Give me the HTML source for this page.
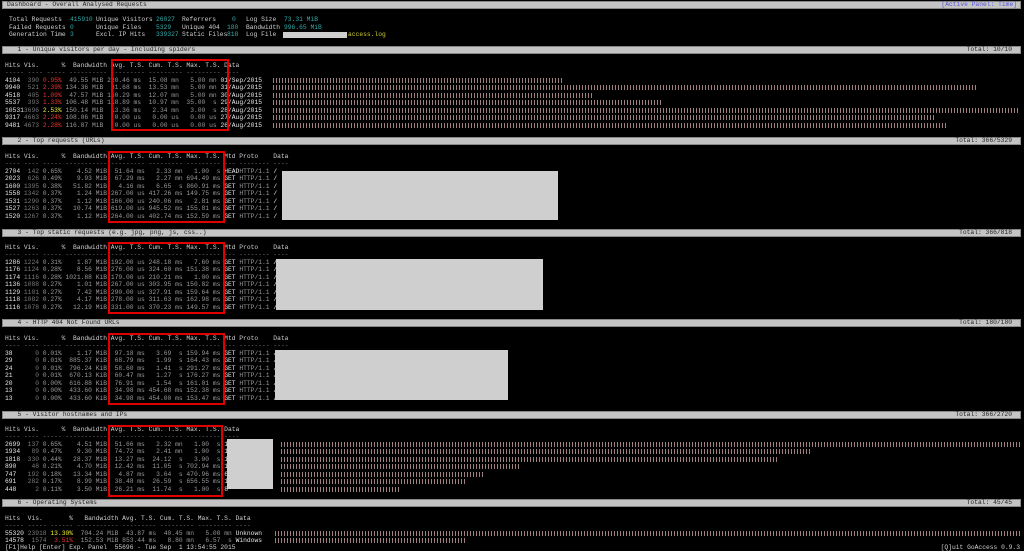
<!DOCTYPE html>
<html><head><meta charset="utf-8"><style>
html,body{margin:0;padding:0;background:#000;width:1024px;height:551px;overflow:hidden}
body{position:relative;font-family:"Liberation Mono",monospace;font-size:6.3px;color:#aaa}
.r{position:absolute;left:5px;white-space:pre;line-height:7.55px;height:7.55px}
.a{position:absolute;white-space:pre;line-height:7.55px}
.bar{position:absolute;left:2px;width:1019px;height:8px;background:#c4c4c4;border:1px solid #888;box-sizing:border-box;color:#222}
.bar span{position:absolute;line-height:6px;top:0;white-space:pre}
.w{color:#e6e6e6}
.g{color:#7a7a7a}
.d{color:#9a9a9a}
.r2{color:#ee3333}
.y{color:#eeee33}
.t{color:#33aaaa}
.l{color:#d0d0d0}
.box{position:absolute;border:2px solid #e00000;box-sizing:border-box}
.gray{position:absolute;background:#cfcfcf}
.b{position:absolute;height:5px;background:repeating-linear-gradient(90deg,#a08080 0 1px,transparent 1px 3px)}
</style></head><body>

<div class="bar" style="top:1px"><span style="left:4px">Dashboard - Overall Analysed Requests</span><span style="right:3px;color:#5555dd">[Active Panel: Time]</span></div>

<div class="a l" style="top:16px;left:9px">Total Requests</div><div class="a t" style="top:16px;left:70px">415910</div><div class="a l" style="top:16px;left:96px">Unique Visitors</div><div class="a t" style="top:16px;left:156px">26027</div><div class="a l" style="top:16px;left:182px">Referrers</div><div class="a t" style="top:16px;left:232px">0</div><div class="a l" style="top:16px;left:246px">Log Size</div><div class="a t" style="top:16px;left:284px">73.31 MiB</div>
<div class="a l" style="top:24px;left:9px">Failed Requests</div><div class="a t" style="top:24px;left:70px">0</div><div class="a l" style="top:24px;left:96px">Unique Files</div><div class="a t" style="top:24px;left:156px">5329</div><div class="a l" style="top:24px;left:182px">Unique 404</div><div class="a t" style="top:24px;left:227px">180</div><div class="a l" style="top:24px;left:246px">Bandwidth</div><div class="a t" style="top:24px;left:284px">996.65 MiB</div>
<div class="a l" style="top:31px;left:9px">Generation Time</div><div class="a t" style="top:31px;left:70px">3</div><div class="a l" style="top:31px;left:96px">Excl. IP Hits</div><div class="a t" style="top:31px;left:156px">339327</div><div class="a l" style="top:31px;left:182px">Static Files</div><div class="a t" style="top:31px;left:227px">818</div><div class="a l" style="top:31px;left:246px">Log File</div><div class="gray" style="left:283px;top:32px;width:64px;height:6px"></div><div class="a" style="top:31px;left:348px;color:#cccc33">access.log</div>

<!-- Panel 1 -->
<div class="bar" style="top:46px"><span style="left:7px">  1 - Unique visitors per day - Including spiders</span><span style="right:8px">Total: 10/10</span></div>
<div class="r l" style="top:62px">Hits Vis.      %  Bandwidth Avg. T.S. Cum. T.S. Max. T.S. Data</div>
<div class="r g" style="top:69px">----- ---- ----- ---------- --------- --------- --------- ----</div>
<div class="r" style="top:77px"><span class="w">4104 </span><span class="g"> 390</span> <span class="r2">0.95%</span><span class="d">  49.55 MiB 220.46 ms  15.08 mn   5.00 mn </span><span class="w">01/Sep/2015</span></div>
<div class="r" style="top:84px"><span class="w">9940 </span><span class="g"> 521</span> <span class="r2">2.39%</span><span class="d"> 134.36 MiB  81.68 ms  13.53 mn   5.00 mn </span><span class="w">31/Aug/2015</span></div>
<div class="r" style="top:92px"><span class="w">4518 </span><span class="g"> 405</span> <span class="r2">1.09%</span><span class="d">  47.57 MiB 160.29 ms  12.07 mn   5.00 mn </span><span class="w">30/Aug/2015</span></div>
<div class="r" style="top:99px"><span class="w">5537 </span><span class="g"> 393</span> <span class="r2">1.33%</span><span class="d"> 106.48 MiB 118.89 ms  10.97 mn  35.00  s </span><span class="w">29/Aug/2015</span></div>
<div class="r" style="top:107px"><span class="w">10531</span><span class="g">3696</span> <span class="y">2.53%</span><span class="d"> 150.14 MiB  13.36 ms   2.34 mn   3.00  s </span><span class="w">28/Aug/2015</span></div>
<div class="r" style="top:114px"><span class="w">9317 </span><span class="g">4663</span> <span class="r2">2.24%</span><span class="d"> 108.06 MiB   0.00 us   0.00 us   0.00 us </span><span class="w">27/Aug/2015</span></div>
<div class="r" style="top:122px"><span class="w">9481 </span><span class="g">4673</span> <span class="r2">2.28%</span><span class="d"> 116.87 MiB   0.00 us   0.00 us   0.00 us </span><span class="w">26/Aug/2015</span></div>
<div class="b" style="top:78px;left:273px;width:289px"></div>
<div class="b" style="top:85px;left:273px;width:703px"></div>
<div class="b" style="top:93px;left:273px;width:319px"></div>
<div class="b" style="top:100px;left:273px;width:390px"></div>
<div class="b" style="top:108px;left:273px;width:747px"></div>
<div class="b" style="top:115px;left:273px;width:661px"></div>
<div class="b" style="top:123px;left:273px;width:673px"></div>
<div class="box" style="left:111px;top:59px;width:118px;height:72px"></div>

<!-- Panel 2 -->
<div class="bar" style="top:137px"><span style="left:7px">  2 - Top requests (URLs)</span><span style="right:8px">Total: 366/5329</span></div>
<div class="r l" style="top:153px">Hits Vis.      %  Bandwidth Avg. T.S. Cum. T.S. Max. T.S. Mtd Proto    Data</div>
<div class="r g" style="top:160px">---- ---- ----- ----------- --------- --------- --------- --- -------- ----</div>
<div class="r" style="top:168px"><span class="w">2704 </span><span class="g"> 142</span><span class="d"> 0.65%    4.52 MiB  51.64 ms   2.33 mn   1.00  s </span><span class="w">HEAD</span><span class="d">HTTP/1.1 </span><span class="w">/</span></div>
<div class="r" style="top:175px"><span class="w">2023 </span><span class="g"> 626</span><span class="d"> 0.49%    9.93 MiB  67.29 ms   2.27 mn 694.49 ms </span><span class="w">GET </span><span class="d">HTTP/1.1 </span><span class="w">/</span></div>
<div class="r" style="top:183px"><span class="w">1600 </span><span class="g">1395</span><span class="d"> 0.38%   51.82 MiB   4.16 ms   6.65  s 860.91 ms </span><span class="w">GET </span><span class="d">HTTP/1.1 </span><span class="w">/</span></div>
<div class="r" style="top:190px"><span class="w">1558 </span><span class="g">1342</span><span class="d"> 0.37%    1.24 MiB 267.00 us 417.26 ms 149.75 ms </span><span class="w">GET </span><span class="d">HTTP/1.1 </span><span class="w">/</span></div>
<div class="r" style="top:198px"><span class="w">1531 </span><span class="g">1290</span><span class="d"> 0.37%    1.12 MiB 166.00 us 240.06 ms   2.81 ms </span><span class="w">GET </span><span class="d">HTTP/1.1 </span><span class="w">/</span></div>
<div class="r" style="top:205px"><span class="w">1527 </span><span class="g">1263</span><span class="d"> 0.37%   10.74 MiB 619.00 us 945.52 ms 155.81 ms </span><span class="w">GET </span><span class="d">HTTP/1.1 </span><span class="w">/</span></div>
<div class="r" style="top:213px"><span class="w">1520 </span><span class="g">1267</span><span class="d"> 0.37%    1.12 MiB 264.00 us 402.74 ms 152.59 ms </span><span class="w">GET </span><span class="d">HTTP/1.1 </span><span class="w">/</span></div>
<div class="gray" style="left:282px;top:171px;width:276px;height:49px"></div>
<div class="box" style="left:108px;top:151px;width:117px;height:72px"></div>

<!-- Panel 3 -->
<div class="bar" style="top:229px"><span style="left:7px">  3 - Top static requests (e.g. jpg, png, js, css..)</span><span style="right:8px">Total: 366/818</span></div>
<div class="r l" style="top:244px">Hits Vis.      %  Bandwidth Avg. T.S. Cum. T.S. Max. T.S. Mtd Proto    Data</div>
<div class="r g" style="top:251px">---- ---- ----- ----------- --------- --------- --------- --- -------- ----</div>
<div class="r" style="top:259px"><span class="w">1286 </span><span class="g">1224</span><span class="d"> 0.31%    1.87 MiB 192.00 us 248.18 ms   7.60 ms </span><span class="w">GET </span><span class="d">HTTP/1.1 </span><span class="w">/</span></div>
<div class="r" style="top:266px"><span class="w">1176 </span><span class="g">1124</span><span class="d"> 0.28%    8.56 MiB 276.00 us 324.60 ms 151.38 ms </span><span class="w">GET </span><span class="d">HTTP/1.1 </span><span class="w">/</span></div>
<div class="r" style="top:274px"><span class="w">1174 </span><span class="g">1116</span><span class="d"> 0.28% 1021.88 KiB 179.00 us 210.21 ms   1.00 ms </span><span class="w">GET </span><span class="d">HTTP/1.1 </span><span class="w">/</span></div>
<div class="r" style="top:281px"><span class="w">1136 </span><span class="g">1088</span><span class="d"> 0.27%    1.01 MiB 267.00 us 303.95 ms 150.82 ms </span><span class="w">GET </span><span class="d">HTTP/1.1 </span><span class="w">/</span></div>
<div class="r" style="top:289px"><span class="w">1129 </span><span class="g">1101</span><span class="d"> 0.27%    7.42 MiB 290.00 us 327.91 ms 159.64 ms </span><span class="w">GET </span><span class="d">HTTP/1.1 </span><span class="w">/</span></div>
<div class="r" style="top:296px"><span class="w">1118 </span><span class="g">1082</span><span class="d"> 0.27%    4.17 MiB 278.00 us 311.63 ms 162.98 ms </span><span class="w">GET </span><span class="d">HTTP/1.1 </span><span class="w">/</span></div>
<div class="r" style="top:304px"><span class="w">1116 </span><span class="g">1078</span><span class="d"> 0.27%   12.19 MiB 331.00 us 370.23 ms 149.57 ms </span><span class="w">GET </span><span class="d">HTTP/1.1 </span><span class="w">/</span></div>
<div class="gray" style="left:276px;top:259px;width:267px;height:51px"></div>
<div class="box" style="left:108px;top:242px;width:117px;height:72px"></div>

<!-- Panel 4 -->
<div class="bar" style="top:319px"><span style="left:7px">  4 - HTTP 404 Not Found URLs</span><span style="right:8px">Total: 180/180</span></div>
<div class="r l" style="top:335px">Hits Vis.      %  Bandwidth Avg. T.S. Cum. T.S. Max. T.S. Mtd Proto    Data</div>
<div class="r g" style="top:342px">---- ---- ----- ----------- --------- --------- --------- --- -------- ----</div>
<div class="r" style="top:350px"><span class="w">38   </span><span class="g">   0</span><span class="d"> 0.01%    1.17 MiB  97.18 ms   3.69  s 159.94 ms </span><span class="w">GET </span><span class="d">HTTP/1.1 </span><span class="w">/</span></div>
<div class="r" style="top:357px"><span class="w">29   </span><span class="g">   0</span><span class="d"> 0.01%  885.37 KiB  68.79 ms   1.99  s 164.43 ms </span><span class="w">GET </span><span class="d">HTTP/1.1 </span><span class="w">/</span></div>
<div class="r" style="top:365px"><span class="w">24   </span><span class="g">   0</span><span class="d"> 0.01%  796.24 KiB  58.60 ms   1.41  s 291.27 ms </span><span class="w">GET </span><span class="d">HTTP/1.1 </span><span class="w">/</span></div>
<div class="r" style="top:372px"><span class="w">21   </span><span class="g">   0</span><span class="d"> 0.01%  670.13 KiB  60.47 ms   1.27  s 176.27 ms </span><span class="w">GET </span><span class="d">HTTP/1.1 </span><span class="w">/</span></div>
<div class="r" style="top:380px"><span class="w">20   </span><span class="g">   0</span><span class="d"> 0.00%  616.88 KiB  76.91 ms   1.54  s 161.01 ms </span><span class="w">GET </span><span class="d">HTTP/1.1 </span><span class="w">/</span></div>
<div class="r" style="top:387px"><span class="w">13   </span><span class="g">   0</span><span class="d"> 0.00%  433.60 KiB  34.98 ms 454.68 ms 152.38 ms </span><span class="w">GET </span><span class="d">HTTP/1.1 </span><span class="w">/</span></div>
<div class="r" style="top:395px"><span class="w">13   </span><span class="g">   0</span><span class="d"> 0.00%  433.60 KiB  34.98 ms 454.00 ms 153.47 ms </span><span class="w">GET </span><span class="d">HTTP/1.1 </span><span class="w">/</span></div>
<div class="gray" style="left:275px;top:350px;width:233px;height:50px"></div>
<div class="box" style="left:108px;top:333px;width:117px;height:72px"></div>

<!-- Panel 5 -->
<div class="bar" style="top:411px"><span style="left:7px">  5 - Visitor hostnames and IPs</span><span style="right:8px">Total: 366/2720</span></div>
<div class="r l" style="top:426px">Hits Vis.      %  Bandwidth Avg. T.S. Cum. T.S. Max. T.S. Data</div>
<div class="r g" style="top:433px">---- ---- ----- ----------- --------- --------- --------- ----</div>
<div class="r" style="top:441px"><span class="w">2699 </span><span class="g"> 137</span><span class="d"> 0.65%    4.51 MiB  51.66 ms   2.32 mn   1.00  s </span><span class="w">1</span></div>
<div class="r" style="top:448px"><span class="w">1934 </span><span class="g">  89</span><span class="d"> 0.47%    9.30 MiB  74.72 ms   2.41 mn   1.00  s </span><span class="w">1</span></div>
<div class="r" style="top:456px"><span class="w">1818 </span><span class="g"> 330</span><span class="d"> 0.44%   28.37 MiB  13.27 ms  24.12  s   3.00  s </span><span class="w">1</span></div>
<div class="r" style="top:463px"><span class="w">890  </span><span class="g">  48</span><span class="d"> 0.21%    4.70 MiB  12.42 ms  11.05  s 702.94 ms </span><span class="w">1</span></div>
<div class="r" style="top:471px"><span class="w">747  </span><span class="g"> 192</span><span class="d"> 0.18%   13.34 MiB   4.87 ms   3.64  s 470.96 ms </span><span class="w">6</span></div>
<div class="r" style="top:478px"><span class="w">691  </span><span class="g"> 282</span><span class="d"> 0.17%    8.99 MiB  38.48 ms  26.59  s 656.55 ms </span><span class="w">1</span></div>
<div class="r" style="top:486px"><span class="w">448  </span><span class="g">   2</span><span class="d"> 0.11%    3.50 MiB  26.21 ms  11.74  s   1.00  s </span><span class="w">8</span></div>
<div class="gray" style="left:227px;top:439px;width:46px;height:50px"></div>
<div class="b" style="top:442px;left:281px;width:739px"></div>
<div class="b" style="top:449px;left:281px;width:529px"></div>
<div class="b" style="top:457px;left:281px;width:496px"></div>
<div class="b" style="top:464px;left:281px;width:239px"></div>
<div class="b" style="top:472px;left:281px;width:202px"></div>
<div class="b" style="top:479px;left:281px;width:186px"></div>
<div class="b" style="top:487px;left:281px;width:119px"></div>
<div class="box" style="left:108px;top:425px;width:115px;height:72px"></div>

<!-- Panel 6 -->
<div class="bar" style="top:499px"><span style="left:7px">  6 - Operating Systems</span><span style="right:8px">Total: 45/45</span></div>
<div class="r l" style="top:515px">Hits  Vis.       %   Bandwidth Avg. T.S. Cum. T.S. Max. T.S. Data</div>
<div class="r g" style="top:522px">----- ----- ------ ----------- --------- --------- --------- ----</div>
<div class="r" style="top:530px"><span class="w">55320 </span><span class="g">23918</span> <span class="y">13.30%</span><span class="d">  704.24 MiB  43.87 ms  40.45 mn   5.00 mn </span><span class="w">Unknown</span></div>
<div class="r" style="top:537px"><span class="w">14578 </span><span class="g"> 1574</span> <span class="r2"> 3.51%</span><span class="d">  152.53 MiB 853.44 ms   8.80 mn   6.57  s </span><span class="w">Windows</span></div>
<div class="b" style="top:531px;left:275px;width:745px"></div>
<div class="b" style="top:538px;left:275px;width:192px"></div>
<div class="r l" style="top:544px">[F1]Help [Enter] Exp. Panel  55696 - Tue Sep  1 13:54:55 2015</div>
<div class="a l" style="top:544px;right:4px">[Q]uit GoAccess 0.9.3</div>
</body></html>
